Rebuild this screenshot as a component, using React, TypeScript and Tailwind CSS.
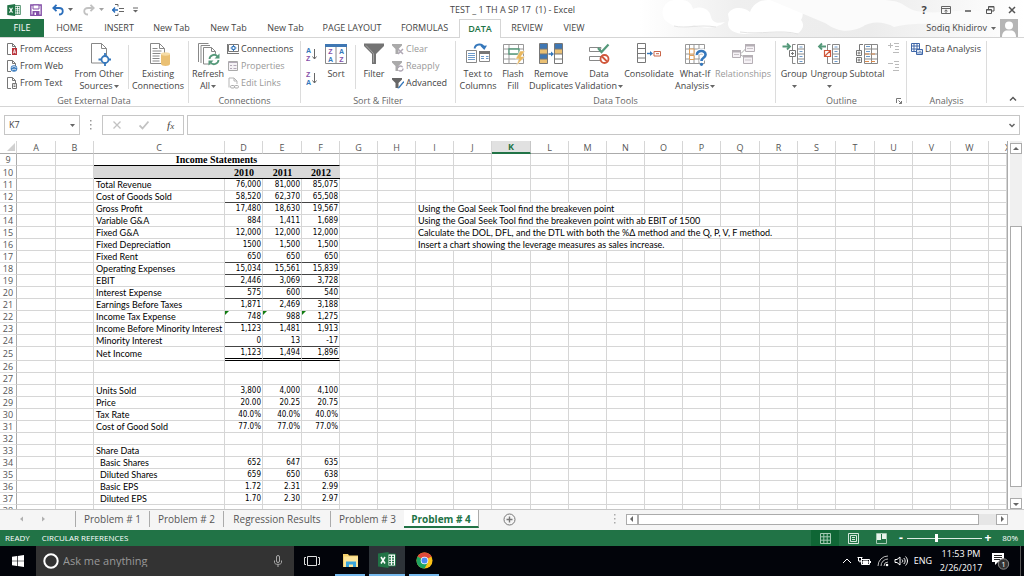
import type { ReactNode } from "react";

type Row = {
  n: number;
  label?: string;
  values?: string[];
  rule?: boolean;
  indent?: boolean;
  flagged?: boolean;
  note?: string;
  noteSpan?: number;
};

const ROWS: Row[] = [
  { n: 11, label: "Total Revenue", values: ["76,000", "81,000", "85,075"] },
  { n: 12, label: "Cost of Goods Sold", values: ["58,520", "62,370", "65,508"], rule: true },
  { n: 13, label: "Gross Profit", values: ["17,480", "18,630", "19,567"], note: "Using the Goal Seek Tool find the breakeven point", noteSpan: 6 },
  { n: 14, label: "Variable G&A", values: ["884", "1,411", "1,689"], note: "Using the Goal Seek Tool find the breakeven point with ab EBIT of 1500", noteSpan: 8 },
  { n: 15, label: "Fixed G&A", values: ["12,000", "12,000", "12,000"], note: "Calculate the DOL, DFL, and the DTL with both the %Δ method and the Q, P, V, F method.", noteSpan: 10 },
  { n: 16, label: "Fixed Depreciation", values: ["1500", "1,500", "1,500"], note: "Insert a chart showing the leverage measures as sales increase.", noteSpan: 7 },
  { n: 17, label: "Fixed Rent", values: ["650", "650", "650"], rule: true },
  { n: 18, label: "Operating Expenses", values: ["15,034", "15,561", "15,839"], rule: true },
  { n: 19, label: "EBIT", values: ["2,446", "3,069", "3,728"], rule: true },
  { n: 20, label: "Interest Expense", values: ["575", "600", "540"], rule: true },
  { n: 21, label: "Earnings Before Taxes", values: ["1,871", "2,469", "3,188"] },
  { n: 22, label: "Income Tax Expense", values: ["748", "988", "1,275"], rule: true, flagged: true },
  { n: 23, label: "Income Before Minority Interest", values: ["1,123", "1,481", "1,913"] },
  { n: 24, label: "Minority Interest", values: ["0", "13", "-17"], rule: true },
  { n: 25, label: "Net Income", values: ["1,123", "1,494", "1,896"] },
  { n: 26 },
  { n: 27 },
  { n: 28, label: "Units Sold", values: ["3,800", "4,000", "4,100"] },
  { n: 29, label: "Price", values: ["20.00", "20.25", "20.75"] },
  { n: 30, label: "Tax Rate", values: ["40.0%", "40.0%", "40.0%"] },
  { n: 31, label: "Cost of Good Sold", values: ["77.0%", "77.0%", "77.0%"] },
  { n: 32 },
  { n: 33, label: "Share Data" },
  { n: 34, label: "Basic Shares", values: ["652", "647", "635"], indent: true },
  { n: 35, label: "Diluted Shares", values: ["659", "650", "638"], indent: true },
  { n: 36, label: "Basic EPS", values: ["1.72", "2.31", "2.99"], indent: true },
  { n: 37, label: "Diluted EPS", values: ["1.70", "2.30", "2.97"], indent: true },
  { n: 38 },
];

const COLUMNS = [
  { name: "A", width: "w-[39px]" },
  { name: "B", width: "w-[38px]" },
  { name: "C", width: "w-[131px]" },
  { name: "D", width: "w-[38px]" },
  { name: "E", width: "w-[39px]" },
  { name: "F", width: "w-[38px]" },
  { name: "G", width: "w-[38px]" },
  { name: "H", width: "w-[38px]" },
  { name: "I", width: "w-[38px]" },
  { name: "J", width: "w-[38px]" },
  { name: "K", width: "w-[39px]" },
  { name: "L", width: "w-[38px]" },
  { name: "M", width: "w-[38px]" },
  { name: "N", width: "w-[38px]" },
  { name: "O", width: "w-[38px]" },
  { name: "P", width: "w-[38px]" },
  { name: "Q", width: "w-[39px]" },
  { name: "R", width: "w-[38px]" },
  { name: "S", width: "w-[38px]" },
  { name: "T", width: "w-[39px]" },
  { name: "U", width: "w-[38px]" },
  { name: "V", width: "w-[38px]" },
  { name: "W", width: "w-[38px]" },
];

const GRID = "border-b border-r border-[#d6d6d6] p-0";

export default function App() {
  return (
    <main className="flex h-screen flex-col overflow-hidden bg-white font-['Open_Sans',sans-serif] text-[9px] leading-3 text-[#444]">
      <Header />
      <Ribbon />
      <FormulaBar />
      <Sheet />
      <SheetTabs />
      <StatusBar />
      <Taskbar />
    </main>
  );
}

function Header() {
  return (
    <header className="relative shrink-0">
      <Clouds />
      <div className="relative flex h-[19px] items-center">
        <div className="flex flex-1 items-center pl-[7px]">
          <ExcelLogo className="h-3 w-[14px]" />
          <button aria-label="Save" className="ml-[9px]">
            <svg className="h-3 w-3" viewBox="0 0 12 12">
              <path d="M.8 1h10.4v10.2H.8z" fill="#fff" stroke="#8450a8" strokeWidth="1.4" />
              <path d="M3 1h6v4H3z" fill="#fff" stroke="#8450a8" />
              <path d="M2.5 7h7v4h-7z" fill="#8450a8" />
              <path d="M4.5 8.5h1.5V11H4.5z" fill="#fff" />
            </svg>
          </button>
          <button aria-label="Undo" className="ml-[10px] flex items-center gap-1">
            <svg className="h-3 w-3" viewBox="0 0 12 12" fill="none" stroke="#2a6ebb" strokeWidth="1.8">
              <path d="M1 4h6c5 0 5 6.500 0 6.500M4.500 .8 1.300 4l3.200 3.200" />
            </svg>
            <Caret />
          </button>
          <button aria-label="Redo" className="ml-[10px] flex items-center gap-1 opacity-60">
            <svg className="h-3 w-3" viewBox="0 0 12 12" fill="none" stroke="#999" strokeWidth="1.800">
              <path d="M11 4H5c-5 0-5 6.500 0 6.500M7.500 .8 10.700 4 7.500 7.200" />
            </svg>
            <Caret />
          </button>
          <button aria-label="Indent rows" className="ml-2">
            <svg className="h-3 w-3" viewBox="0 0 12 12" fill="none" stroke="#666">
              <path d="M3 .5h3v2M3 11.500h3v-2M7 4.500h5M7 7.500h5" />
              <path d="M0 6h6M3 3.500 .8 6 3 8.500" stroke="#2a6ebb" strokeWidth="1.400" />
            </svg>
          </button>
          <button aria-label="Customize toolbar" className="ml-2">
            <svg className="h-2 w-2" viewBox="0 0 8 8">
              <path d="M1 2h5" stroke="#666" />
              <path d="M1 4h5L3.500 6.500z" fill="#666" />
            </svg>
          </button>
        </div>
        <h1 className="whitespace-pre text-[9px]">{"TEST _ 1 TH A SP 17  (1) - Excel"}</h1>
        <div className="flex flex-1 items-center justify-end gap-[10px] pr-[6px]">
          <button aria-label="Help" className="w-3 text-[11px] font-bold">?</button>
          <button aria-label="Ribbon display options">
            <svg className="h-3 w-3" viewBox="0 0 12 12" fill="none" stroke="#666">
              <path d="M1.500 2.500h9v7h-9zM1.500 4.500h9M6 9V6M4.500 7.200 6 5.800l1.500 1.400" />
            </svg>
          </button>
          <button aria-label="Minimize">
            <svg className="h-3 w-3" viewBox="0 0 12 12"><path d="M3 7h6" stroke="#555" strokeWidth="1.500" /></svg>
          </button>
          <button aria-label="Restore">
            <svg className="h-3 w-3" viewBox="0 0 12 12" fill="none" stroke="#555">
              <path d="M2.500 5.500h5v4h-5zM4.500 5V2.500h5.500v4.500H8M4.500 3H10M2.500 6h5" />
            </svg>
          </button>
          <button aria-label="Close">
            <svg className="h-3 w-3" viewBox="0 0 12 12"><path d="m3 3 6 6M9 3 3 9" stroke="#555" strokeWidth="1.500" /></svg>
          </button>
        </div>
      </div>

      <nav className="relative flex h-[19px] border-b border-[#d5d5d5]">
        <Tab width="w-[44px]" style="bg-[#217346] text-white">FILE</Tab>
        <Tab width="w-[51px]">HOME</Tab>
        <Tab width="w-[48px]">INSERT</Tab>
        <Tab width="w-[57px]">New Tab</Tab>
        <Tab width="w-[57px]">New Tab</Tab>
        <Tab width="w-[57px]">New Tab</Tab>
        <Tab width="w-[76px]">PAGE LAYOUT</Tab>
        <Tab width="w-[69px]">FORMULAS</Tab>
        <Tab width="w-[42px]" style="-mb-px border border-b-0 border-[#d5d5d5] bg-white text-[#217346] font-semibold">DATA</Tab>
        <Tab width="w-[52px]">REVIEW</Tab>
        <Tab width="w-[42px]">VIEW</Tab>
        <button className="ml-auto flex items-center whitespace-nowrap">
          Sodiq Khidirov
          <span className="ml-1 mr-1"><Caret /></span>
        </button>
        <svg className="mr-[6px] h-[18px] w-[18px] bg-[#b5b5b5]" viewBox="0 0 18 18" role="img" aria-label="Account">
          <circle cx="9" cy="6.500" r="4" fill="#fff" />
          <path d="M2 18c0-4 2-6.500 5-6.500h4c3 0 5 2.500 5 6.500z" fill="#fff" />
        </svg>
      </nav>
    </header>
  );
}

function Tab({ width, style = "", children }: { width: string; style?: string; children: ReactNode }) {
  return <button className={`shrink-0 whitespace-nowrap ${width} ${style}`}>{children}</button>;
}

function Clouds() {
  return (
    <svg className="absolute right-0 top-0 h-[37px] w-[384px]" viewBox="0 0 384 37" aria-hidden="true">
      <defs>
        <linearGradient id="sky" x1="0" x2="1">
          <stop offset="0" stopColor="#fff" />
          <stop offset=".25" stopColor="#efefef" />
          <stop offset=".6" stopColor="#ececec" />
          <stop offset="1" stopColor="#fff" />
        </linearGradient>
      </defs>
      <path d="M0 0h384v37H0z" fill="url(#sky)" />
      <path d="M24 19c-4-8 0-18 10-19h8c6 0 10 4 11 9 8-4 17 0 18 8 2 7 8 6 14 5-10 8-24 6-31 3-12 5-22 2-30-6z" fill="#fff" />
      <path d="M88 14c4-8 16-7 22-2 3-8 10-12 18-12h20c12 0 18 12 13 20 4 5 2 10-4 14-20-4-38 0-52 0-12 0-20-6-16-14z" fill="#fff" />
      <path d="M130 0h110c30 0 20 10 44 12 20 2 40-4 60 0v12c-40 0-70-2-90 3-10-6-24-6-32 0-14 6-24 5-37-4z" fill="#fbfbfb" />
      <path d="M34 26c12 3 25-2 42 1M100 32c20 3 40-3 58 2" stroke="#e4e4e4" fill="none" />
    </svg>
  );
}

function Ribbon() {
  return (
    <section aria-label="Data" className="flex h-[69px] shrink-0 border-b border-[#d5d5d5]">
      <Group name="Get External Data" width="w-[188px]">
        <SmallList style="w-[67px] pl-[6px]">
          <Small icon={<SourceIcon kind="access" />}>From Access</Small>
          <Small icon={<SourceIcon kind="web" />}>From Web</Small>
          <Small icon={<SourceIcon kind="text" />}>From Text</Small>
        </SmallList>
        <Big width="w-[58px] ml-[3px]" icon={<OtherSourcesIcon />} lines={["From Other", "Sources"]} caret />
        <Divider />
        <Big width="w-[58px]" icon={<ExistingIcon />} lines={["Existing", "Connections"]} />
      </Group>
      <Divider tall />
      <Group name="Connections" width="w-[111px]">
        <Big width="w-[38px]" icon={<RefreshIcon />} lines={["Refresh", "All"]} caret />
        <SmallList>
          <Small icon={<ConnectionsIcon />}>Connections</Small>
          <Small icon={<PropertiesIcon />} muted>Properties</Small>
          <Small icon={<EditLinksIcon />} muted>Edit Links</Small>
        </SmallList>
      </Group>
      <Divider tall />
      <Group name="Sort & Filter" width="w-[154px]">
        <div className="flex w-[22px] flex-col items-center gap-2 pt-[6px]">
          <button aria-label="Sort A to Z"><OrderIcon top="A" bottom="Z" /></button>
          <button aria-label="Sort Z to A"><OrderIcon top="Z" bottom="A" /></button>
        </div>
        <Big width="w-[26px]" icon={<SortIcon />} lines={["Sort"]} />
        <div className="w-[6px]" />
        <Divider />
        <Big width="w-[36px]" icon={<FilterIcon />} lines={["Filter"]} />
        <SmallList>
          <Small icon={<MiniFilter kind="clear" />} muted>Clear</Small>
          <Small icon={<MiniFilter kind="reapply" />} muted>Reapply</Small>
          <Small icon={<MiniFilter kind="advanced" />}>Advanced</Small>
        </SmallList>
      </Group>
      <Divider tall />
      <Group name="Data Tools" width="w-[319px]">
        <Big width="w-[44px]" icon={<TextColumnsIcon />} lines={["Text to", "Columns"]} />
        <Big width="w-[26px]" icon={<FlashIcon />} lines={["Flash", "Fill"]} />
        <Big width="w-[50px]" icon={<DuplicatesIcon />} lines={["Remove", "Duplicates"]} />
        <Big width="w-[46px]" icon={<ValidationIcon />} lines={["Data", "Validation"]} caret />
        <Big width="w-[54px]" icon={<ConsolidateIcon />} lines={["Consolidate"]} />
        <Big width="w-[38px]" icon={<WhatIfIcon />} lines={["What-If", "Analysis"]} caret />
        <Big width="w-[58px]" icon={<RelationshipsIcon />} lines={["Relationships"]} muted />
      </Group>
      <Divider tall />
      <Group name="Outline" width="w-[130px]" launcher>
        <div className="w-[3px]" />
        <Big width="w-[30px]" icon={<GroupIcon />} lines={["Group", ""]} caret />
        <Big width="w-[40px]" icon={<GroupIcon removed />} lines={["Ungroup", ""]} caret />
        <Big width="w-[36px]" icon={<SubtotalIcon />} lines={["Subtotal"]} />
        <div className="flex flex-col gap-[6px] pl-[3px] pt-[2px]">
          <button aria-label="Show detail" disabled><DetailIcon plus /></button>
          <button aria-label="Hide detail" disabled><DetailIcon /></button>
        </div>
      </Group>
      <Divider tall />
      <Group name="Analysis" width="w-[79px]">
        <SmallList style="pl-[4px]">
          <Small icon={<AnalysisIcon />}>Data Analysis</Small>
        </SmallList>
      </Group>
      <Divider tall />
      <button aria-label="Collapse ribbon" className="ml-auto self-end pb-[3px] pr-[7px]">
        <svg className="h-2 w-2" viewBox="0 0 8 8" fill="none" stroke="#555" strokeWidth="1.400"><path d="m1 5.500 3-3 3 3" /></svg>
      </button>
    </section>
  );
}

function Group({ name, width, launcher, children }: { name: string; width: string; launcher?: boolean; children: ReactNode }) {
  return (
    <div className={`flex shrink-0 flex-col pt-[2px] ${width}`}>
      <div className="flex h-[55px]">{children}</div>
      <div className="flex h-[11px] items-center">
        <span className="flex-1 text-center leading-[11px] text-[#666]">{name}</span>
        {launcher && (
          <button aria-label={`${name} settings`} className="-ml-3 pr-[3px]">
            <svg className="h-2 w-2" viewBox="0 0 8 8" fill="none" stroke="#777">
              <path d="M1.500 6V1.500H6M3.500 3.500l3 3M6.500 4v2.500H4" />
            </svg>
          </button>
        )}
      </div>
    </div>
  );
}

function Divider({ tall }: { tall?: boolean }) {
  return <div className={`w-px shrink-0 bg-[#dcdcdc] ${tall ? "my-[3px]" : "mb-[6px] mt-[5px]"}`} />;
}

function Big({ width, icon, lines, caret, muted }: { width: string; icon: ReactNode; lines: string[]; caret?: boolean; muted?: boolean }) {
  return (
    <button className={`flex shrink-0 flex-col items-center whitespace-nowrap pt-[2px] ${width} ${muted ? "text-[#999]" : ""}`}>
      <svg className="mb-[2px] h-6 w-6 shrink-0" viewBox="0 0 24 24" fill="none">{icon}</svg>
      {lines.map((line, i) => (
        <span key={i} className="flex h-3 items-center gap-px">
          {line}
          {caret && i === lines.length - 1 && <Caret />}
        </span>
      ))}
    </button>
  );
}

function SmallList({ style = "", children }: { style?: string; children: ReactNode }) {
  return <div className={`flex flex-col ${style}`}>{children}</div>;
}

function Small({ icon, muted, children }: { icon: ReactNode; muted?: boolean; children: ReactNode }) {
  return (
    <button disabled={muted} className={`flex h-[17px] items-center gap-[2px] whitespace-nowrap ${muted ? "text-[#999]" : ""}`}>
      <svg className="h-3 w-3 shrink-0" viewBox="0 0 12 12" fill="none">{icon}</svg>
      {children}
    </button>
  );
}

function Caret() {
  return (
    <svg className="h-[3px] w-[5px]" viewBox="0 0 5 3" aria-hidden="true">
      <path d="M0 0h5L2.500 3z" fill="#666" />
    </svg>
  );
}

/* Ribbon icons, large ones on a 24 grid and small ones on a 12 grid */

function SourceIcon({ kind }: { kind: "access" | "web" | "text" }) {
  return (
    <>
      <path d="M1.500 11.500V.5h5l3 3v3M6.500.5v3h3M1.500 11.500H5" stroke="#777" fill="none" />
      {kind === "access" && (
        <>
          <path d="M6 5h5v7H6z" fill="#b8323a" />
          <path d="M7.300 10.500 8.500 6.500l1.200 4M7.800 9.200h1.500" stroke="#fff" strokeWidth=".8" />
        </>
      )}
      {kind === "web" && (
        <>
          <circle cx="8" cy="8.500" r="3.300" fill="#3f7fc0" />
          <path d="M5.500 8c1.500-2 3.500-2 5 0M6 10c1.500-1 3-1 4 0" stroke="#fff" strokeWidth=".8" />
        </>
      )}
      {kind === "text" && <path d="M6.500 6.500h4v5h-4zM7.500 8h2M7.500 9.500h2" stroke="#777" />}
    </>
  );
}

function OtherSourcesIcon() {
  return (
    <>
      <path d="M4.500 1.500h10l5 5v14.500h-15zM14.500 1.500v5h5" fill="#fff" stroke="#888" />
      <circle cx="18" cy="17.500" r="3.500" fill="#fff" stroke="#3577bb" strokeWidth="1.800" />
      <path d="M18 11v3.500M18 20.500V24M11.500 17.500H15M21 17.500h3" stroke="#3577bb" strokeWidth="1.800" />
    </>
  );
}

function ExistingIcon() {
  return (
    <>
      <path d="M4.500 1.500h9l5 5v15h-14zM13.500 1.500v5h5" fill="#fff" stroke="#888" />
      <path d="M6.500 6.500h5M6.500 9h9M6.500 11.500h8M6.500 14h7M6.500 16.500h7M6.500 19h7" stroke="#888" />
      <path d="M15 12v10c0 2.500 9 2.500 9 0V12z" fill="#eac073" />
      <ellipse cx="19.500" cy="12" rx="4.500" ry="1.700" fill="#f6dca6" />
    </>
  );
}

function RefreshIcon() {
  return (
    <>
      <path d="M2.500 20V1.500h10M5 21V3.500h9" stroke="#888" />
      <path d="M7.500 5.500h8l4 4v12.500h-12zM15.500 5.500v4h4" fill="#fff" stroke="#888" />
      <circle cx="18" cy="17.500" r="6" fill="#fff" />
      <path d="M13.500 17a4.500 4.500 0 0 1 8-2.500M22.500 18a4.500 4.500 0 0 1-8 2.500" stroke="#55997a" strokeWidth="1.800" />
      <path d="M23.500 11.500v5h-5zM12.500 23.500v-5h5z" fill="#55997a" />
    </>
  );
}

function ConnectionsIcon() {
  return (
    <>
      <path d="M1.500 1.500h10v7h-10zM0 10.500h12M.5 1v9" stroke="#777" />
      <circle cx="6.500" cy="5" r="1.700" stroke="#3577bb" strokeWidth="1.200" />
      <path d="M6.500 2v1M6.500 7v1M3.500 5h1M8.500 5h1" stroke="#3577bb" />
    </>
  );
}

function PropertiesIcon() {
  return (
    <>
      <path d="M1.500 1.500h9v9h-9z" fill="#f5f2f6" stroke="#aaa" />
      <path d="M1.500 2.500h9M3 5.500h2M3 8.500h2M6.500 5.500h3M6.500 8.500h3" stroke="#b3a9b8" />
    </>
  );
}

function EditLinksIcon() {
  return (
    <>
      <path d="M2 10.500V1h5l3 3v3M7 1v3h3" stroke="#b5b5b5" />
      <rect x="3.500" y="8.500" width="4" height="2.500" rx="1.200" stroke="#aaa" />
      <rect x="7.500" y="8.500" width="4" height="2.500" rx="1.200" stroke="#aaa" />
    </>
  );
}

function OrderIcon({ top, bottom }: { top: string; bottom: string }) {
  return (
    <svg className="h-4 w-3 font-['Liberation_Sans',sans-serif]" viewBox="0 0 12 16">
      <text x="0" y="7" fontSize="7" fontWeight="700" fill={top === "A" ? "#3577bb" : "#8450a8"}>{top}</text>
      <text x="0" y="15" fontSize="7" fontWeight="700" fill={bottom === "A" ? "#3577bb" : "#8450a8"}>{bottom}</text>
      <path d="M8.500 3v10M6.500 10.500l2 2.500 2-2.500" fill="none" stroke="#666" />
    </svg>
  );
}

function SortIcon() {
  return (
    <>
      <path d="M1.500 4.500h21v17h-21zM12 4.500v17" fill="#fff" stroke="#888" />
      <path d="M1 2h22v3H1z" fill="#3f77b3" />
      <g className="font-['Liberation_Sans',sans-serif]" fontSize="7" fontWeight="700" textAnchor="middle">
        <text x="6.500" y="12" fill="#8450a8">Z</text>
        <text x="6.500" y="20" fill="#3577bb">A</text>
        <text x="17.500" y="12" fill="#3577bb">A</text>
        <text x="17.500" y="20" fill="#8450a8">Z</text>
      </g>
    </>
  );
}

function FilterIcon() {
  return (
    <>
      <path d="M2 1.500h20v2.500l-8 8v10h-4V12L2 4z" fill="#737373" />
      <path d="m4 3.500 7.500 8v9" stroke="#a5a5a5" />
    </>
  );
}

function MiniFilter({ kind }: { kind: "clear" | "reapply" | "advanced" }) {
  const color = kind === "advanced" ? "#666" : "#aaa";
  return (
    <>
      <path d="M0 1h10v1.500L6.500 6v5h-3V6L0 2.500z" fill={color} />
      {kind === "clear" && <path d="m6 6 5 5M11 6l-5 5" stroke="#b0a8b5" strokeWidth="1.500" />}
      {kind === "reapply" && <circle cx="8.500" cy="8.500" r="2.500" fill="#fff" stroke="#b0a8b5" strokeWidth="1.300" strokeDasharray="6 2" />}
      {kind === "advanced" && <path d="m11.500 4-5 6-1 1.800 2-.8 5-6" fill="#3577bb" />}
    </>
  );
}

function TextColumnsIcon() {
  return (
    <>
      <path d="M.5 8.500h10v12H.5z" fill="#fff" stroke="#888" />
      <path d="M2 11.500h7M2 13.500h7M2 15.500h7M2 17.500h7" stroke="#6c9bcc" />
      <path d="M13.500 9.500h10v10h-10z" fill="#fff" stroke="#888" />
      <path d="M13 9h11v3H13z" fill="#777" />
      <path d="M15 14.500h3M20 14.500h2.500M15 16.500h3M20 16.500h2.500" stroke="#6c9bcc" />
      <path d="M8.500 6.500c1-5 8-5.500 9.500-.5" stroke="#3577bb" strokeWidth="1.800" />
      <path d="m14.500 4 3.800 4L21 3.500z" fill="#3577bb" />
    </>
  );
}

function FlashIcon() {
  return (
    <>
      <path d="M2.500 2.500h20v19h-20zM2.500 7h20M2.500 12h20M2.500 17h20M8 2.500v19M17.500 2.500v19" stroke="#999" />
      <path d="M8 7h10v5H8z" fill="#fff" stroke="#55997a" strokeWidth="1.300" />
      <path d="m19 9-4.500 8h3.500l-3 7 9-9.500h-4l4-5.500z" fill="#e9b85f" stroke="#fff" strokeWidth=".5" />
    </>
  );
}

function DuplicatesIcon() {
  return (
    <>
      <path d="M.5 2h8v5h-8zM.5 12h8v5h-8zM15.500 2h8v5h-8z" fill="#3f77b3" />
      <path d="M.5 7h8v5h-8zM.5 17h8v5h-8zM15.500 7h8v5h-8z" fill="#eac073" />
      <path d="M.5 1.500h8v20h-8zM15.500 1.500h8v20h-8zM.5 7h8M.5 12h8M.5 17h8M15.500 7h8M15.500 12h8M15.500 17h8" stroke="#777" />
      <path d="M9.500 12h3" stroke="#3577bb" strokeWidth="1.500" />
      <path d="m12 9.500 3 2.500-3 2.500z" fill="#3577bb" />
    </>
  );
}

function ValidationIcon() {
  return (
    <>
      <path d="M14 5.500H2.500v4h11M14 14.500H2.500v4H13M14 5.500l-1 4" stroke="#888" />
      <path d="m11 6 3.500 4L21.500 2.500" stroke="#55997a" strokeWidth="2.200" />
      <circle cx="17.500" cy="17" r="4" fill="#fff" stroke="#d0573b" strokeWidth="1.800" />
      <path d="m15 14.500 5 5" stroke="#d0573b" strokeWidth="1.800" />
    </>
  );
}

function ConsolidateIcon() {
  return (
    <>
      <path d="M.5 1.500h8v19h-8zM.5 6.500h8M.5 11.500h8M.5 16h8" stroke="#777" />
      <path d="M10 11.500h4" stroke="#3577bb" strokeWidth="1.400" />
      <path d="m13 9 3 2.500-3 2.500z" fill="#3577bb" />
      <path d="M17 9.500h6.500v4.500H17zM19 11.700h3" stroke="#c9664a" />
    </>
  );
}

function WhatIfIcon() {
  return (
    <>
      <path d="M2.500 2.500h19v19h-19zM2.500 7h19M2.500 12h19M2.500 17h19M6.500 2.500v19M11 2.500v19M16 2.500v19" stroke="#999" />
      <path d="M6.500 7H11v5H6.500zM6.500 13.500H11v4H6.500z" fill="#fff" stroke="#e0a05a" />
      <path d="M14 13c-.5-5 9-5.500 8.500 0-.3 3-4 2.500-4 6.500" stroke="#fff" strokeWidth="5" />
      <path d="M14 13c-.5-5 9-5.500 8.500 0-.3 3-4 2.500-4 6" stroke="#3577bb" strokeWidth="2.600" />
      <circle cx="18.500" cy="22.300" r="1.600" fill="#3577bb" />
    </>
  );
}

function RelationshipsIcon() {
  return (
    <>
      <path d="M10 11.500 14.500 7M10 13l4.500 3" stroke="#aaa" />
      <path d="M1.500 8.500h8v7h-8zM14.500 2.500h9v7h-9zM12.500 13.500h9v8h-9z" fill="#f6f2f6" stroke="#b5afb5" />
      <path d="M1 8h9v2.500H1zM14 2h10v2.500H14zM12 13h10v2.500H12z" fill="#b5afb5" />
      <path d="M3 12.500h5M16 6.500h6M14 18h6" stroke="#c9c4c9" />
    </>
  );
}

function GroupIcon({ removed }: { removed?: boolean }) {
  return (
    <>
      <path d="M15.500 2.500h7v19h-7zM15.500 7h7M15.500 12h7M15.500 17h7" stroke="#888" />
      <path d="M17.500 5h3M17.500 9.500h3M17.500 14.500h3M17.500 19.500h3" stroke="#6c9bcc" />
      <path d="M13.500 2.500h-3V8M10.500 15v6.500h3" stroke="#888" />
      {removed ? (
        <>
          <path d="M2 4.500h7M5 1.500l-3 3 3 3" stroke="#55997a" strokeWidth="1.800" />
          <path d="M7.500 8.500h6v6h-6zM7.500 14.500l6-6" fill="#fff" stroke="#d0573b" strokeWidth="1.200" />
        </>
      ) : (
        <>
          <path d="M.5 4.500H8M5 1.500l3 3-3 3" stroke="#55997a" strokeWidth="1.800" />
          <path d="M7.500 8.500h6v6h-6zM10.500 10v3M9 11.500h3" fill="#fff" stroke="#777" />
        </>
      )}
    </>
  );
}

function SubtotalIcon() {
  return (
    <>
      <path d="M9.500 2.500h13v19h-13zM9.500 7h13M9.500 12h13M9.500 17h13M16.500 2.500v19" stroke="#888" />
      <path d="M11 4.500h4M11 9.500h4M11 14.500h4" stroke="#6c9bcc" />
      <path d="M10 12h12M10 19.500h12" stroke="#dc8b4c" strokeDasharray="4 2" />
      <path d="M8 2.500H4.500V8M1.500 8.500h5v5h-5zM4 9.500v3M2.500 11h3M1.500 15.500h5v5h-5zM4 16.500v3M2.500 18h3" stroke="#777" />
    </>
  );
}

function DetailIcon({ plus }: { plus?: boolean }) {
  return (
    <svg className="h-3 w-3" viewBox="0 0 12 12" fill="none" stroke="#bbb">
      <path d="M0 3.500h5M6 1.500h5M7 4.500h4M7 7.500h4M5 10.500h6" />
      {plus && <path d="M2.500 1v5" />}
    </svg>
  );
}

function AnalysisIcon() {
  return (
    <>
      <path d="M.5.500h8v8h-8z" fill="#fff" stroke="#3f67a8" />
      <path d="M.5 3h8M.5 6h8M3 .500v8M6 .500v8" stroke="#3f67a8" />
      <path d="M5.500 6.500h6v5h-6z" fill="#dce6f3" stroke="#3f67a8" />
      <path d="M7 10.500V9M9 10.500V8M10.500 10.500v-1" stroke="#3f67a8" />
    </>
  );
}

function FormulaBar() {
  return (
    <div className="flex h-[34px] shrink-0 items-start px-1 pt-2">
      <div className="flex h-5 w-[76px] items-center border border-[#c6c6c6] pl-1 pr-[4px]">
        <input aria-label="Name box" defaultValue="K7" className="w-full min-w-0 outline-none" />
        <button aria-label="Open name list"><Caret /></button>
      </div>
      <svg className="mx-[10px] mt-1 h-3 w-[2px]" viewBox="0 0 2 12" fill="#999">
        <path d="M0 1h1.500v1.500H0zM0 5h1.500v1.500H0zM0 9h1.500v1.500H0z" />
      </svg>
      <div className="flex h-5 w-[82px] items-center justify-around border border-[#c6c6c6]">
        <button aria-label="Cancel" disabled>
          <svg className="h-[10px] w-[10px]" viewBox="0 0 10 10" stroke="#c2c2c2" strokeWidth="1.300"><path d="m1.500 1.500 7 7M8.500 1.500l-7 7" /></svg>
        </button>
        <button aria-label="Enter" disabled>
          <svg className="h-[10px] w-[10px]" viewBox="0 0 10 10" fill="none" stroke="#c2c2c2" strokeWidth="1.800"><path d="m.500 5.500 3 3 6-7" /></svg>
        </button>
        <button aria-label="Insert function" className="font-['Liberation_Serif',serif] text-[11px] italic">
          f<span className="text-[9px]">x</span>
        </button>
      </div>
      <div className="ml-[3px] flex h-5 flex-1 items-center border border-[#c6c6c6] pr-[3px]">
        <input aria-label="Formula" className="w-full min-w-0 px-1 outline-none" />
        <button aria-label="Expand formula bar">
          <svg className="h-2 w-2" viewBox="0 0 8 8" fill="none" stroke="#666" strokeWidth="1.500"><path d="m1.500 3 2.500 2.500L6.500 3" /></svg>
        </button>
      </div>
    </div>
  );
}

function Empty({ from, to }: { from: number; to: number }) {
  return Array.from({ length: to - from }, (_, i) => <td key={i} className={GRID} />);
}

function Sheet() {
  return (
    <div className="flex min-h-0 flex-1">
      <div className="min-w-0 flex-1 overflow-hidden border-r border-[#ababab]">
        <table aria-label="Income Statements" className="w-full table-fixed border-separate border-spacing-0 text-[9px] leading-[11px] text-black">
          <colgroup>
            <col className="w-[17px]" />
            {COLUMNS.map((col) => <col key={col.name} className={col.width} />)}
            <col />
          </colgroup>
          <thead>
            <tr className="h-[13px] text-[#555]">
              <th className="border-b border-r border-[#ababab] border-r-[#d6d6d6] p-0">
                <svg className="ml-[7px] h-2 w-2" viewBox="0 0 8 8"><path d="M8 0v8H0z" fill="#d0d0d0" /></svg>
              </th>
              {COLUMNS.map((col) => (
                <th
                  key={col.name}
                  scope="col"
                  className={
                    col.name === "K"
                      ? "border-b-2 border-r border-b-[#217346] border-r-[#c6c6c6] bg-[#e1e1e1] p-0 font-bold text-[#217346]"
                      : "border-b border-r border-b-[#ababab] border-r-[#d6d6d6] p-0 font-normal"
                  }
                >
                  {col.name}
                </th>
              ))}
              <th scope="col" className="overflow-hidden border-b border-[#ababab] p-0 pl-4 text-left font-normal">X</th>
            </tr>
          </thead>
          <tbody>
            <tr className="h-3">
              <RowNumber n={9} />
              <Empty from={0} to={2} />
              <th colSpan={4} className="border-b border-r border-b-black border-r-[#d6d6d6] p-0 text-center font-['Liberation_Serif',serif] text-[10px]">
                Income Statements
              </th>
              <Empty from={6} to={24} />
            </tr>
            <tr className="h-[13px]">
              <RowNumber n={10} />
              <Empty from={0} to={2} />
              <td className="border-b border-black bg-[#d9d9d9] p-0" />
              {["2010", "2011", "2012"].map((year) => (
                <th key={year} scope="col" className="border-b border-black bg-[#d9d9d9] p-0 text-center font-['Liberation_Serif',serif] text-[10px] font-bold">
                  {year}
                </th>
              ))}
              <Empty from={6} to={24} />
            </tr>
            {ROWS.map((row) => <SheetRow key={row.n} row={row} />)}
          </tbody>
        </table>
      </div>
      <div className="ml-[2px] mr-[2px] flex w-3 shrink-0 flex-col bg-[#f0f0f0] pt-[2px]">
        <ScrollButton label="Scroll up" path="M1 5h6L4 2z" />
        <div className="min-h-0 flex-[73]" />
        <div className="min-h-0 flex-[261] border border-[#ababab] bg-white" />
        <div className="min-h-0 flex-[11]" />
        <ScrollButton label="Scroll down" path="M1 3h6L4 6z" />
      </div>
    </div>
  );
}

function RowNumber({ n }: { n: number }) {
  return (
    <th scope="row" className="border-b border-r border-b-[#e0e0e0] border-r-[#ababab] p-0 text-center font-normal text-[#555]">
      {n}
    </th>
  );
}

function SheetRow({ row }: { row: Row }) {
  const last = row.n === 25;
  let edge = "border-b border-b-[#d6d6d6]";
  if (row.rule) edge = "border-b border-b-[#444]";
  if (last) edge = "border-b-[3px] border-double border-b-black";

  return (
    <tr className={last ? "h-[14px]" : "h-3"}>
      <RowNumber n={row.n} />
      <Empty from={0} to={2} />
      <td className={`${GRID} whitespace-nowrap font-['Lato',sans-serif] ${row.indent ? "pl-[6px]" : "pl-[2px]"}`}>{row.label}</td>
      {row.values ? (
        row.values.map((value, i) => (
          <td key={i} className={`relative border-r border-r-[#d6d6d6] p-0 pr-px text-right font-['DejaVu_Sans_Condensed','DejaVu_Sans',sans-serif] text-[8px] ${edge}`}>
            {row.flagged && (
              <svg className="absolute left-0 top-0 h-1 w-1" viewBox="0 0 4 4" aria-hidden="true"><path d="M0 0h4L0 4z" fill="#107c10" /></svg>
            )}
            {value}
          </td>
        ))
      ) : (
        <Empty from={3} to={6} />
      )}
      {row.note && row.noteSpan ? (
        <>
          <Empty from={6} to={8} />
          <td colSpan={row.noteSpan} className={`${GRID} whitespace-nowrap pl-[2px] font-['Lato',sans-serif]`}>{row.note}</td>
          <Empty from={8 + row.noteSpan} to={24} />
        </>
      ) : (
        <Empty from={6} to={24} />
      )}
    </tr>
  );
}

function ScrollButton({ label, path }: { label: string; path: string }) {
  return (
    <button aria-label={label} className="flex h-[11px] w-3 shrink-0 items-center justify-center border border-[#ababab] bg-white">
      <svg className="h-2 w-2" viewBox="0 0 8 8" fill="#666"><path d={path} /></svg>
    </button>
  );
}

function SheetTabs() {
  return (
    <div className="flex h-[21px] shrink-0 items-center border-t border-[#c6c6c6] bg-[#f5f5f5] pb-[2px] text-[10px]">
      <div className="flex w-[75px] items-center gap-[14px] pl-[18px]">
        <button aria-label="Previous sheet" className="flex">
          <svg className="h-2 w-2" viewBox="0 0 8 8" fill="#b0b0b0"><path d="M5 1.500v5L2 4z" /></svg>
        </button>
        <button aria-label="Next sheet" className="flex">
          <svg className="h-2 w-2" viewBox="0 0 8 8" fill="#b0b0b0"><path d="M2 1.500v5L5 4z" /></svg>
        </button>
      </div>
      <SheetTab width="w-[74px]">Problem # 1</SheetTab>
      <SheetTab width="w-[74px]">Problem # 2</SheetTab>
      <SheetTab width="w-[107px]">Regression Results</SheetTab>
      <SheetTab width="w-[74px]">Problem # 3</SheetTab>
      <button className="h-[18px] w-[75px] whitespace-nowrap border-b-2 border-r border-b-[#217346] border-r-[#ababab] bg-white pt-px font-bold text-[#217346]">
        Problem # 4
      </button>
      <button aria-label="New sheet" className="ml-6">
        <svg className="h-[13px] w-[13px]" viewBox="0 0 13 13" fill="none" stroke="#777"><circle cx="6.500" cy="6.500" r="5.500" /><path d="M6.500 3.500v6M3.500 6.500h6" strokeWidth="1.400" /></svg>
      </button>
      <svg className="ml-auto mr-[10px] h-3 w-[2px]" viewBox="0 0 2 12" fill="#aaa">
        <path d="M0 1h1.500v1.500H0zM0 5h1.500v1.500H0zM0 9h1.500v1.500H0z" />
      </svg>
      <div className="mr-4 flex h-[11px] w-[37.3%] bg-[#e6e6e6]">
        <ScrollButton label="Scroll left" path="M5 1v6L2 4z" />
        <div className="mr-[17px] flex-1 border border-[#ababab] bg-white" />
        <ScrollButton label="Scroll right" path="M3 1v6l3-3z" />
      </div>
    </div>
  );
}

function SheetTab({ width, children }: { width: string; children: ReactNode }) {
  return <button className={`h-4 whitespace-nowrap border-l border-[#ababab] text-[#555] ${width}`}>{children}</button>;
}

function StatusBar() {
  return (
    <footer className="flex h-4 shrink-0 items-center bg-[#217346] pl-[5px] pr-[6px] text-[8px] text-white">
      <span>READY</span>
      <span className="ml-3">CIRCULAR REFERENCES</span>
      <div className="ml-auto flex items-center">
        <button aria-label="Normal view" className="flex h-4 w-7 items-center justify-center bg-[#0f6635]">
          <svg className="h-[11px] w-[11px]" viewBox="0 0 11 11" fill="none" stroke="#a5cbb4"><path d="M.5.500h10v10H.5zM.5 3.800h10M.5 7.200h10M3.800.500v10M7.200.500v10" /></svg>
        </button>
        <button aria-label="Page layout view" className="flex w-7 items-center justify-center">
          <svg className="h-[11px] w-[11px]" viewBox="0 0 11 11" fill="none" stroke="#d5e8dc"><path d="M.5.500h10v10H.5zM2.500 2.500h6v6h-6zM4 4.500h3M4 6.500h3" /></svg>
        </button>
        <button aria-label="Page break preview" className="flex w-7 items-center justify-center">
          <svg className="h-[11px] w-[11px]" viewBox="0 0 11 11" fill="none"><path d="M.5.500h10v10H.5z" stroke="#a5cbb4" /><path d="M1 1h4v6H1zM6 1h4v5H6z" fill="#e8f3ec" /></svg>
        </button>
        <button aria-label="Zoom out" className="w-3 text-[12px] font-bold leading-3">-</button>
        <input
          type="range"
          aria-label="Zoom"
          min={0}
          max={100}
          defaultValue={39}
          className="h-2 w-[75px] appearance-none bg-transparent bg-[linear-gradient(#dcebe2,#dcebe2)] bg-[length:100%_1px] bg-center bg-no-repeat [&::-webkit-slider-thumb]:h-2 [&::-webkit-slider-thumb]:w-[3px] [&::-webkit-slider-thumb]:appearance-none [&::-webkit-slider-thumb]:bg-white"
        />
        <button aria-label="Zoom in" className="w-3 text-[12px] font-bold leading-3">+</button>
        <span className="w-6 text-right">80%</span>
      </div>
    </footer>
  );
}

function Taskbar() {
  return (
    <div className="flex h-[30px] shrink-0 bg-[#02040a] text-[9px] text-white">
      <button aria-label="Start" className="flex w-9 items-center justify-center">
        <svg className="h-3 w-3" viewBox="0 0 12 12" fill="#fff"><path d="M0 1.700 5 1v4.700H0zM5.700.9 12 0v5.700H5.700zM0 6.300h5V11l-5-.7zM5.700 6.300H12V12l-6.300-.9z" /></svg>
      </button>
      <div className="flex w-[258px] items-center bg-[#333] pl-[7px] pr-[11px]">
        <svg className="h-4 w-4 shrink-0" viewBox="0 0 16 16" fill="none" stroke="#fff" strokeWidth="2"><circle cx="8" cy="8" r="6.700" /></svg>
        <input aria-label="Search" placeholder="Ask me anything" className="ml-1 min-w-0 flex-1 text-[11px] outline-none placeholder:text-[#999]" />
        <button aria-label="Voice search">
          <svg className="h-3 w-[10px]" viewBox="0 0 10 12" fill="none" stroke="#aaa"><rect x="3.500" y=".5" width="3" height="7" rx="1.500" /><path d="M1.500 5.500v2c0 2.500 7 2.500 7 0v-2M5 9.500V12" /></svg>
        </button>
      </div>
      <button aria-label="Task view" className="flex w-9 items-center justify-center">
        <svg className="h-3 w-4" viewBox="0 0 16 12" fill="none" stroke="#ddd"><path d="M3.500 1.500h9v9h-9zM2 2.500H.5v7H2M14 2.500h1.500v7H14" /></svg>
      </button>
      <div className="ml-[5px] flex gap-1">
        <button aria-label="File Explorer" className="flex w-[30px] items-center justify-center border-b-2 border-[#76b9ed]">
          <svg className="h-[15px] w-[17px]" viewBox="0 0 17 15">
            <path d="M1 1h5l1 1.500h9V14H1z" fill="#f3cf6a" />
            <path d="M2 3.500h14V14H2z" fill="#fce59a" />
            <path d="M4 14V8.500h10V14h-3v-2.500H7V14z" fill="#39a5dc" />
          </svg>
        </button>
        <button aria-label="Excel" className="flex w-9 items-center justify-center border-b-2 border-[#76b9ed] bg-[#2d3338]">
          <ExcelLogo className="h-4 w-[18px]" />
        </button>
        <button aria-label="Chrome" className="flex w-[30px] items-center justify-center border-b-2 border-[#76b9ed]">
          <svg className="h-[17px] w-[17px]" viewBox="0 0 18 18">
            <circle cx="9" cy="9" r="8.500" fill="#fbc116" />
            <path d="M9 9 1.640 4.750a8.500 8.500 0 0 1 14.720 0z" fill="#de4a3c" />
            <path d="M1.640 4.750A8.500 8.500 0 0 0 9 17.500l3.500-6.500L9 9z" fill="#1ea362" />
            <path d="M9 5h7.500l-.5-1L9 3z" fill="#de4a3c" />
            <circle cx="9" cy="9" r="4" fill="#fff" />
            <circle cx="9" cy="9" r="3.200" fill="#4a8af4" />
          </svg>
        </button>
      </div>
      <div className="ml-auto flex items-center">
        <button aria-label="Show hidden icons" className="flex w-[18px] justify-center">
          <svg className="h-2 w-[10px]" viewBox="0 0 10 8" fill="none" stroke="#fff"><path d="m1 6 4-4 4 4" /></svg>
        </button>
        <svg className="mr-[3px] h-[10px] w-4" viewBox="0 0 16 10" fill="none" stroke="#fff" role="img" aria-label="Battery">
          <path d="M5.500 3.500h8v5h-8zM14.500 5v2" /><path d="M7 5h5v2.500H7z" fill="#fff" /><path d="M2.500 2v3h3V2M4 5v1.500M1.500 1.500h5" />
        </svg>
        <svg className="mx-[2px] h-3 w-3" viewBox="0 0 12 12" fill="none" role="img" aria-label="Wi-Fi">
          <path d="M1 11A10 10 0 0 1 11 1M4 11a7 7 0 0 1 7-7M7 11a4 4 0 0 1 4-4" stroke="#bbb" /><circle cx="10" cy="10" r="1.300" fill="#fff" />
        </svg>
        <svg className="mx-[3px] h-3 w-[14px]" viewBox="0 0 14 12" fill="none" stroke="#fff" role="img" aria-label="Volume">
          <path d="M1 4.500h2L6 2v8L3 7.500H1zM8 4.500c1 1 1 2 0 3M9.800 3c1.800 2 1.800 4 0 6M11.600 1.500c2.500 3 2.500 6 0 9" />
        </svg>
        <span className="w-6 text-center">ENG</span>
        <div className="w-[52px] text-center leading-[14px]">
          <div>11:53 PM</div>
          <div>2/26/2017</div>
        </div>
        <button aria-label="1 new notification" className="flex w-[26px] justify-center">
          <svg className="h-5 w-5" viewBox="0 0 20 20">
            <path d="M2 2h12v9H8l-3 3v-3H2z" fill="#fff" />
            <path d="M4 4.500h8M4 6.500h8M4 8.500h6" stroke="#222" />
            <circle cx="13.500" cy="13" r="5.200" fill="#333" stroke="#888" />
            <text x="13.500" y="16" fontSize="8" fill="#fff" textAnchor="middle">1</text>
          </svg>
        </button>
        <div className="ml-[7px] mr-[3px] h-full w-px bg-[#555]" />
      </div>
    </div>
  );
}

function ExcelLogo({ className }: { className: string }) {
  return (
    <svg className={className} viewBox="0 0 18 16" role="img" aria-label="Excel">
      <path d="M9 2h8.500v12H9z" fill="#fff" stroke="#217346" />
      <path d="M11 4.500h2M14 4.500h2M11 7h2M14 7h2M11 9.500h2M14 9.500h2M11 12h2M14 12h2" stroke="#217346" strokeWidth="1.500" />
      <path d="M0 1.500 10.500 0v16L0 14.500z" fill="#217346" />
      <path d="m3 5 4 6.500M7 5l-4 6.500" stroke="#fff" strokeWidth="1.500" />
    </svg>
  );
}
